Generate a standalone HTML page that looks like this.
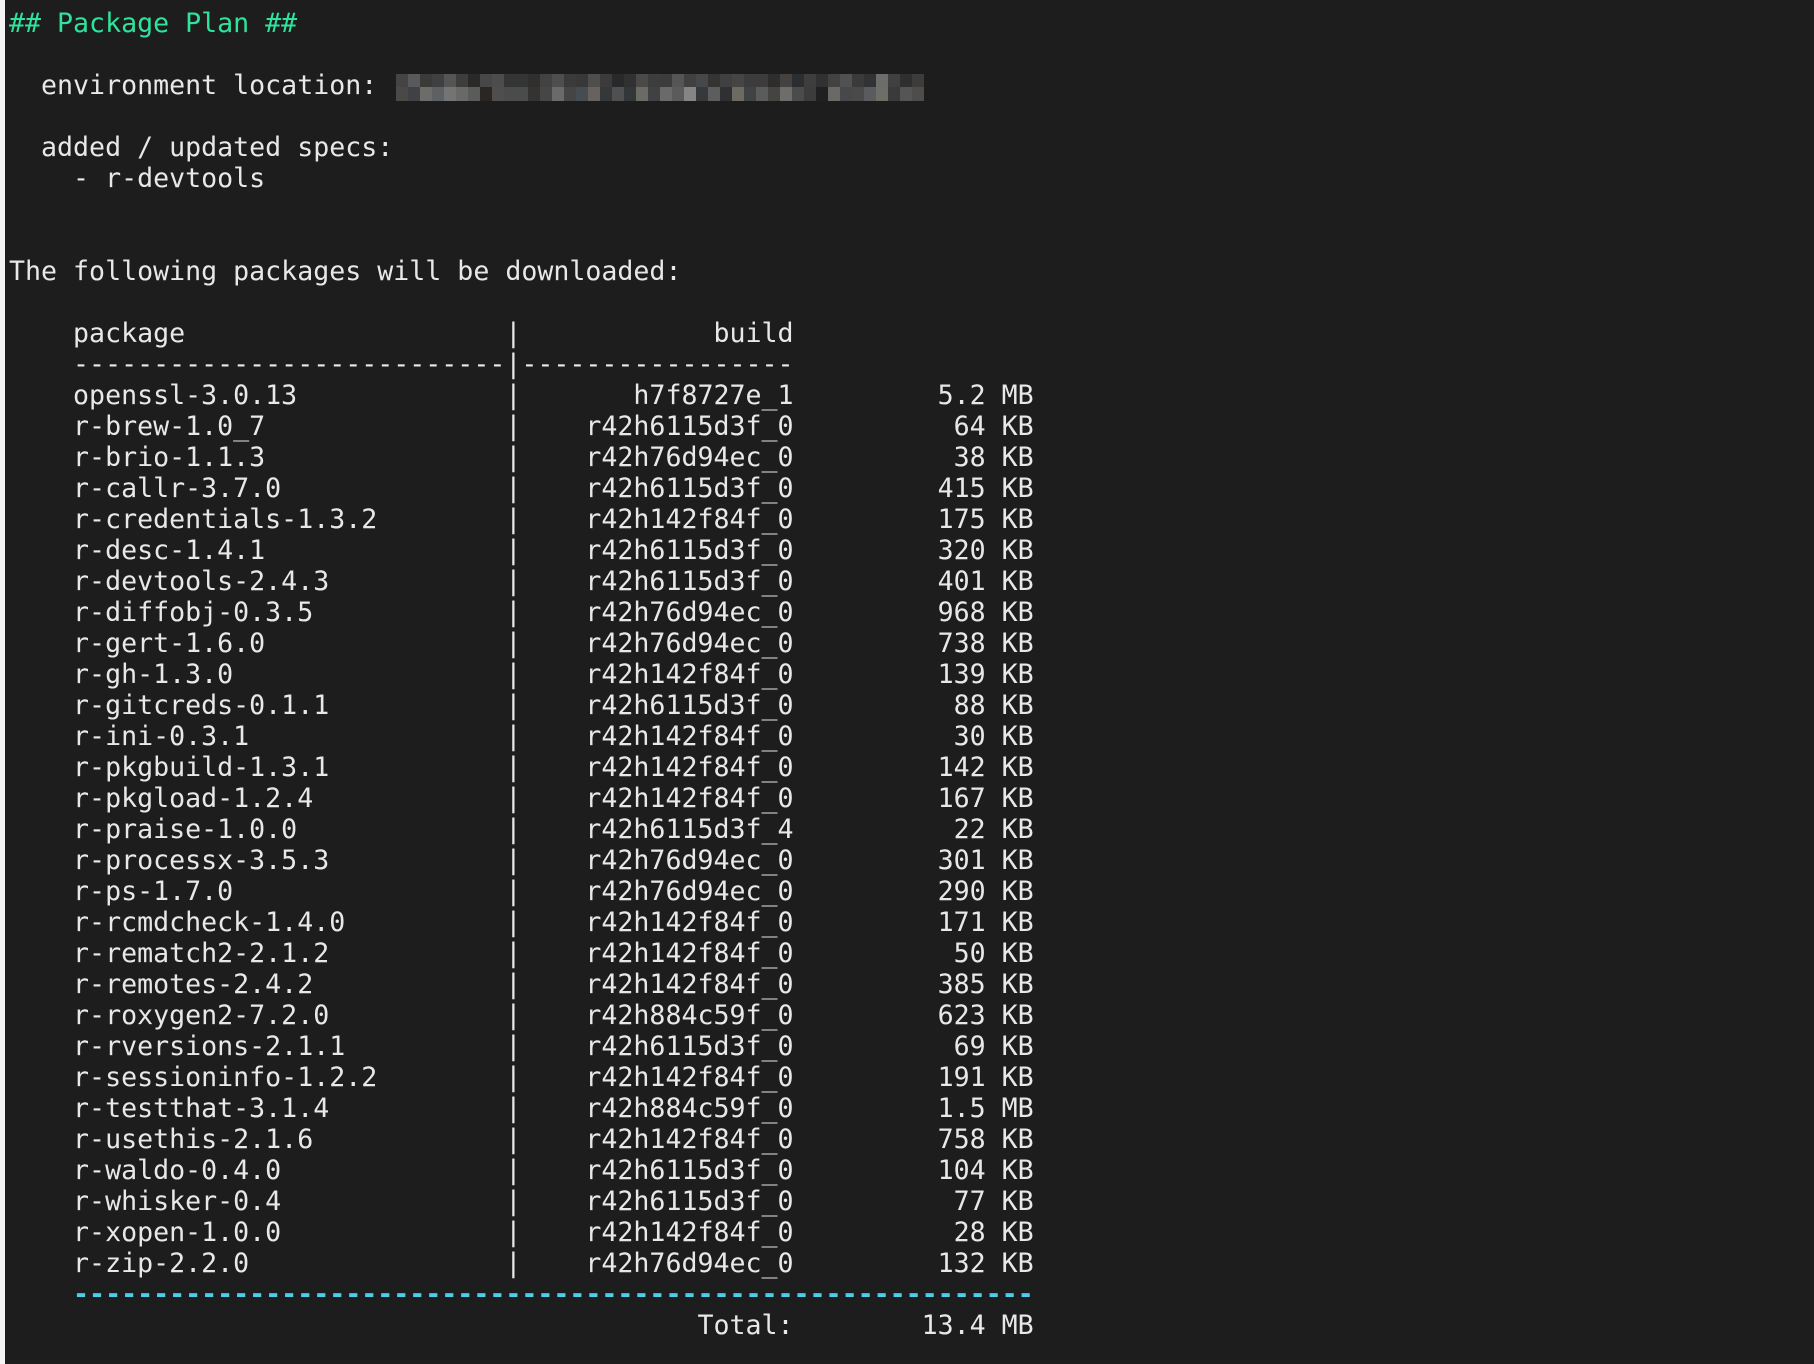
<!DOCTYPE html>
<html><head><meta charset="utf-8">
<style>
html,body{margin:0;padding:0;}
body{width:1814px;height:1364px;background:#1d1d1d;position:relative;overflow:hidden;}
.strip{position:absolute;left:0;top:0;width:5px;height:1364px;background:#f4f4f4;}
pre{position:absolute;left:9px;top:8px;margin:0;font-family:"DejaVu Sans Mono","Liberation Mono",monospace;font-size:26.6px;line-height:31px;color:#e8e8e8;}
.g{color:#2ee39c;}
.c{color:#4ccdf0;font-weight:bold;}
.bar{position:absolute;left:396px;top:74px;width:528px;height:27px;display:grid;grid-template-columns:repeat(44,12px);grid-template-rows:13px 14px;}
</style></head><body>
<div class="strip"></div>
<pre><span class="g">## Package Plan ##</span>

  environment location: 

  added / updated specs:
    - r-devtools


The following packages will be downloaded:

    package                    |            build
    ---------------------------|-----------------
    openssl-3.0.13             |       h7f8727e_1         5.2 MB
    r-brew-1.0_7               |    r42h6115d3f_0          64 KB
    r-brio-1.1.3               |    r42h76d94ec_0          38 KB
    r-callr-3.7.0              |    r42h6115d3f_0         415 KB
    r-credentials-1.3.2        |    r42h142f84f_0         175 KB
    r-desc-1.4.1               |    r42h6115d3f_0         320 KB
    r-devtools-2.4.3           |    r42h6115d3f_0         401 KB
    r-diffobj-0.3.5            |    r42h76d94ec_0         968 KB
    r-gert-1.6.0               |    r42h76d94ec_0         738 KB
    r-gh-1.3.0                 |    r42h142f84f_0         139 KB
    r-gitcreds-0.1.1           |    r42h6115d3f_0          88 KB
    r-ini-0.3.1                |    r42h142f84f_0          30 KB
    r-pkgbuild-1.3.1           |    r42h142f84f_0         142 KB
    r-pkgload-1.2.4            |    r42h142f84f_0         167 KB
    r-praise-1.0.0             |    r42h6115d3f_4          22 KB
    r-processx-3.5.3           |    r42h76d94ec_0         301 KB
    r-ps-1.7.0                 |    r42h76d94ec_0         290 KB
    r-rcmdcheck-1.4.0          |    r42h142f84f_0         171 KB
    r-rematch2-2.1.2           |    r42h142f84f_0          50 KB
    r-remotes-2.4.2            |    r42h142f84f_0         385 KB
    r-roxygen2-7.2.0           |    r42h884c59f_0         623 KB
    r-rversions-2.1.1          |    r42h6115d3f_0          69 KB
    r-sessioninfo-1.2.2        |    r42h142f84f_0         191 KB
    r-testthat-3.1.4           |    r42h884c59f_0         1.5 MB
    r-usethis-2.1.6            |    r42h142f84f_0         758 KB
    r-waldo-0.4.0              |    r42h6115d3f_0         104 KB
    r-whisker-0.4              |    r42h6115d3f_0          77 KB
    r-xopen-1.0.0              |    r42h142f84f_0          28 KB
    r-zip-2.2.0                |    r42h76d94ec_0         132 KB
    <span class="c">------------------------------------------------------------</span>
                                           Total:        13.4 MB
</pre>
<div class="bar">
<div style="background:#444"></div><div style="background:#58595b"></div><div style="background:#3b3a38"></div><div style="background:#3f4042"></div><div style="background:#555"></div><div style="background:#3d3d3d"></div><div style="background:#2a2928"></div><div style="background:#474747"></div><div style="background:#4c4c4c"></div><div style="background:#333537"></div><div style="background:#353535"></div><div style="background:#302f2e"></div><div style="background:#424242"></div><div style="background:#4e4e4e"></div><div style="background:#3a3a3a"></div><div style="background:#383838"></div><div style="background:#504e4b"></div><div style="background:#3b3b3b"></div><div style="background:#28292a"></div><div style="background:#313131"></div><div style="background:#4a4947"></div><div style="background:#3c3d3e"></div><div style="background:#3c3c3c"></div><div style="background:#555"></div><div style="background:#404040"></div><div style="background:#45484b"></div><div style="background:#363431"></div><div style="background:#3f4042"></div><div style="background:#474543"></div><div style="background:#3b3c3e"></div><div style="background:#3d3c3b"></div><div style="background:#2d2d2d"></div><div style="background:#434241"></div><div style="background:#2a2e31"></div><div style="background:#3f3e3d"></div><div style="background:#313131"></div><div style="background:#434241"></div><div style="background:#505153"></div><div style="background:#3c3a38"></div><div style="background:#303234"></div><div style="background:#6c6c68"></div><div style="background:#404040"></div><div style="background:#2e2f31"></div><div style="background:#3d3c3b"></div>
<div style="background:#4a4947"></div><div style="background:#404144"></div><div style="background:#6c6c68"></div><div style="background:#5e6163"></div><div style="background:#747474"></div><div style="background:#6a6965"></div><div style="background:#5a5c5b"></div><div style="background:#2a2623"></div><div style="background:#4e4e4e"></div><div style="background:#4b4b4b"></div><div style="background:#4a4c4b"></div><div style="background:#333"></div><div style="background:#484644"></div><div style="background:#6a6a6a"></div><div style="background:#454545"></div><div style="background:#474c50"></div><div style="background:#67625e"></div><div style="background:#363738"></div><div style="background:#505050"></div><div style="background:#34373a"></div><div style="background:#6b6a64"></div><div style="background:#404142"></div><div style="background:#6a6a6a"></div><div style="background:#5a5b5d"></div><div style="background:#858585"></div><div style="background:#37383a"></div><div style="background:#5c5e5e"></div><div style="background:#2f3031"></div><div style="background:#6d6a63"></div><div style="background:#404244"></div><div style="background:#5a5c5c"></div><div style="background:#454443"></div><div style="background:#6e6d6a"></div><div style="background:#4b4b4b"></div><div style="background:#3c3c3c"></div><div style="background:#1f2022"></div><div style="background:#6a6966"></div><div style="background:#47484a"></div><div style="background:#4a4a4a"></div><div style="background:#5a5b5f"></div><div style="background:#6e6d68"></div><div style="background:#3a3a3a"></div><div style="background:#555"></div><div style="background:#4e4d4b"></div>
</div>
</body></html>
